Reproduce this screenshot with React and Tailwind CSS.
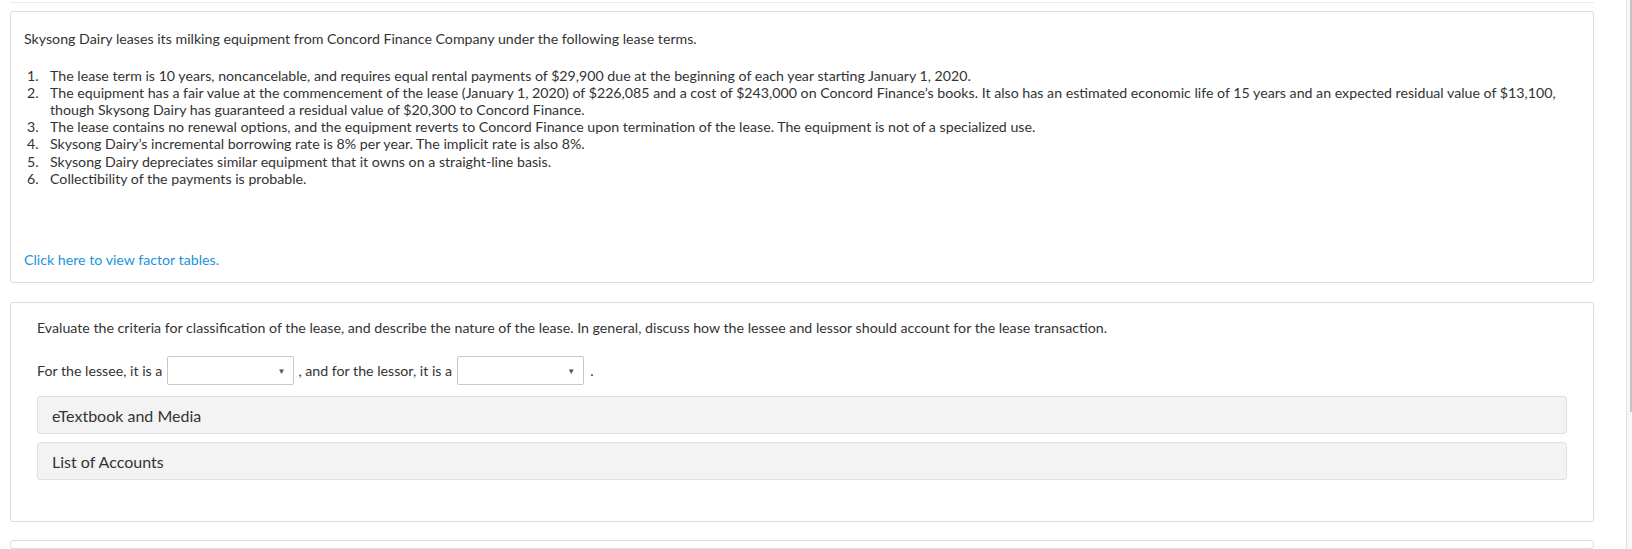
import React from "react";

const items = [
  "The lease term is 10 years, noncancelable, and requires equal rental payments of $29,900 due at the beginning of each year starting January 1, 2020.",
  "The equipment has a fair value at the commencement of the lease (January 1, 2020) of $226,085 and a cost of $243,000 on Concord Finance\u2019s books. It also has an estimated economic life of 15 years and an expected residual value of $13,100, though Skysong Dairy has guaranteed a residual value of $20,300 to Concord Finance.",
  "The lease contains no renewal options, and the equipment reverts to Concord Finance upon termination of the lease. The equipment is not of a specialized use.",
  "Skysong Dairy\u2019s incremental borrowing rate is 8% per year. The implicit rate is also 8%.",
  "Skysong Dairy depreciates similar equipment that it owns on a straight-line basis.",
  "Collectibility of the payments is probable.",
];

function Select() {
  return (
    <span className="inline-flex items-center justify-end w-[127px] h-[29px] border border-[#c8c8c8] rounded-[2px] bg-white pr-[8px] align-middle">
      <span className="text-[8px] leading-none text-[#555]">▼</span>
    </span>
  );
}

export default function App() {
  return (
    <div className="w-[1632px] h-[549px] overflow-hidden bg-white flex text-[#333] font-['Lato','Liberation_Sans',sans-serif] text-[14.2px] leading-[1.21]">
      <div className="ml-[10px] w-[1584px] flex flex-col">
        <div className="h-[10px] border-b border-[#ebebeb]" />
        <div className="mt-[8px] border border-[#dcdcdc] rounded-[3px] pt-[18px] pb-[14px] px-[13px]">
          <p>Skysong Dairy leases its milking equipment from Concord Finance Company under the following lease terms.</p>
          <div className="mt-[20px] flex flex-col">
            {items.map((t, i) => (
              <div key={i} className="flex">
                <span className="w-[26px] pl-[3px] shrink-0">{i + 1}.</span>
                <span className="flex-1">{t}</span>
              </div>
            ))}
          </div>
          <p className="mt-[64px] text-[#1a94db]">Click here to view factor tables.</p>
        </div>
        <div className="mt-[19px] border border-[#dcdcdc] rounded-[3px] pt-[16px] pb-[41px] px-[26px]">
          <p>Evaluate the criteria for classification of the lease, and describe the nature of the lease. In general, discuss how the lessee and lessor should account for the lease transaction.</p>
          <div className="mt-[20px] flex items-center h-[29px]">
            <span>For the lessee, it is a</span>
            <span className="ml-[5px]"><Select /></span>
            <span className="ml-[4px]">, and for the lessor, it is a</span>
            <span className="ml-[5px]"><Select /></span>
            <span className="ml-[6px]">.</span>
          </div>
          <div className="mt-[11px] h-[38px] flex items-center px-[14px] bg-[#f3f3f3] border border-[#e0e0e0] rounded-[3px] text-[16px]">eTextbook and Media</div>
          <div className="mt-[8px] h-[38px] flex items-center px-[14px] bg-[#f3f3f3] border border-[#e0e0e0] rounded-[3px] text-[16px]">List of Accounts</div>
        </div>
        <div className="mt-[18px] h-[40px] border border-[#dcdcdc] rounded-[3px]" />
      </div>
      <div className="ml-auto w-[6px] border-l border-[#e3e3e3] bg-[#f7f7f7] flex justify-end">
        <div className="w-[2px] h-[412px] bg-[#c4c4c4]" />
      </div>
    </div>
  );
}
